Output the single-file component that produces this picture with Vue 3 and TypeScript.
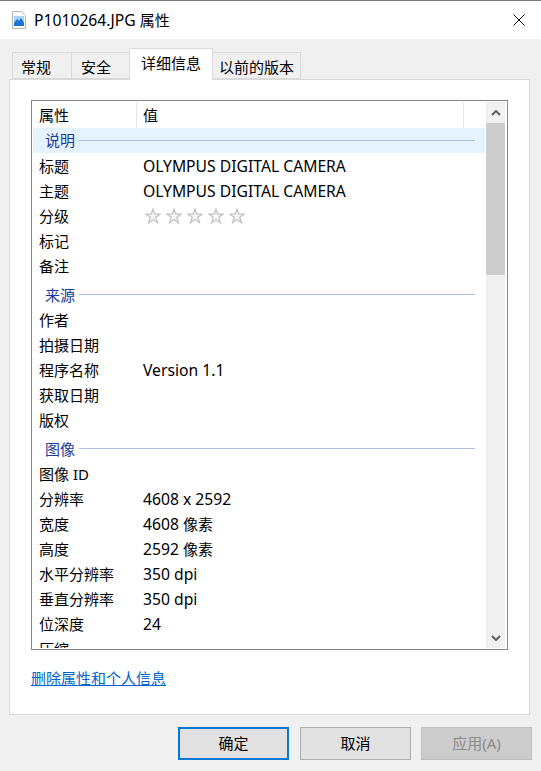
<script setup lang="ts">
type Row = { kind: 'group' | 'row' | 'stars'; label: string; value?: string; unit?: string; active?: boolean }

const rows: Row[] = [
  { kind: 'group', label: '说明', active: true },
  { kind: 'row', label: '标题', value: 'OLYMPUS DIGITAL CAMERA' },
  { kind: 'row', label: '主题', value: 'OLYMPUS DIGITAL CAMERA' },
  { kind: 'stars', label: '分级' },
  { kind: 'row', label: '标记' },
  { kind: 'row', label: '备注' },
  { kind: 'group', label: '来源' },
  { kind: 'row', label: '作者' },
  { kind: 'row', label: '拍摄日期' },
  { kind: 'row', label: '程序名称', value: 'Version 1.1' },
  { kind: 'row', label: '获取日期' },
  { kind: 'row', label: '版权' },
  { kind: 'group', label: '图像' },
  { kind: 'row', label: '图像 ID' },
  { kind: 'row', label: '分辨率', value: '4608 x 2592' },
  { kind: 'row', label: '宽度', value: '4608 ', unit: '像素' },
  { kind: 'row', label: '高度', value: '2592 ', unit: '像素' },
  { kind: 'row', label: '水平分辨率', value: '350 dpi' },
  { kind: 'row', label: '垂直分辨率', value: '350 dpi' },
  { kind: 'row', label: '位深度', value: '24' },
  { kind: 'row', label: '压缩' },
]
const tabs = ['常规', '安全', '详细信息', '以前的版本']
</script>

<template>
  <div class="win">
    <header class="titlebar">
      <svg class="fileicon" width="14" height="18" viewBox="0 0 14 18">
        <path d="M.5.5h9l4 4v13H.5z" fill="#fff" stroke="#b4b4b4" />
        <path d="M2 5h10v10H2z" fill="#a7d2f5" />
        <path d="M2 15v-3l3-4 2 2 2-3 3 5v3z" fill="#1a74d6" />
      </svg>
      <span class="titletext"><span class="latin">P1010264.JPG </span>属性</span>
      <svg class="close" width="12" height="12" viewBox="0 0 12 12">
        <path d="M.5.5l11 11M11.500.5l-11 11" stroke="#111" stroke-width="1" fill="none" />
      </svg>
    </header>

    <main class="body">
      <nav class="tabs">
        <div
          v-for="(t, i) in tabs"
          :key="t"
          class="tab"
          :class="['tab' + i, { on: i === 2 }]"
        >{{ t }}</div>
      </nav>

      <section class="panel">
        <div class="listbox">
          <div class="listmain">
            <div class="head">
              <div class="hcell hname">属性</div>
              <div class="hcell hval">值</div>
              <div class="hrest"></div>
            </div>
            <div class="rows">
              <template v-for="r in rows" :key="r.label">
                <div v-if="r.kind === 'group'" class="group" :class="{ active: r.active }">
                  <span class="gname">{{ r.label }}</span>
                  <span class="gline"></span>
                </div>
                <div v-else class="row">
                  <span class="name">{{ r.label }}</span>
                  <span v-if="r.kind === 'stars'" class="stars">
                    <svg v-for="n in 5" :key="n" width="16" height="16" viewBox="0 0 16 16">
                      <path d="M8 1.200l1.800 4.900h5.300l-4.300 3.200 1.600 5.400L8 11.500l-4.400 3.200 1.600-5.400L.9 6.100h5.300z" fill="#f6f6f6" stroke="#c4c4c4" stroke-width="1.300" />
                    </svg>
                  </span>
                  <span v-else class="val"><span class="latin">{{ r.value }}</span>{{ r.unit }}</span>
                </div>
              </template>
            </div>
          </div>
          <div class="scrollbar">
            <div class="arrow">
              <svg width="10" height="6" viewBox="0 0 10 6"><path d="M1 5l4-4 4 4" fill="none" stroke="#606060" stroke-width="2" /></svg>
            </div>
            <div class="thumb"></div>
            <div class="track"></div>
            <div class="arrow">
              <svg width="10" height="6" viewBox="0 0 10 6"><path d="M1 1l4 4 4-4" fill="none" stroke="#606060" stroke-width="2" /></svg>
            </div>
          </div>
        </div>
        <a class="link">删除属性和个人信息</a>
      </section>

      <footer class="buttons">
        <button class="btn primary">确定</button>
        <button class="btn">取消</button>
        <button class="btn disabled">应用(A)</button>
      </footer>
    </main>
  </div>
</template>

<style scoped>
.win {
  width: 541px;
  height: 771px;
  display: flex;
  flex-direction: column;
  background: #f0f0f0;
  font-family: "Noto Sans", "Noto Sans CJK SC", sans-serif;
  font-size: 15px;
  color: #000;
  overflow: hidden;
}
.latin { font-size: 15.7px; }
.titlebar {
  height: 39px;
  flex: none;
  box-sizing: border-box;
  border-top: 1px solid #7a7a7a;
  background: #fff;
  display: flex;
  align-items: center;
  padding: 0 16px 0 12px;
}
.fileicon { flex: none; margin-right: 8px; }
.titletext { flex: 1; font-size: 15px; }
.close { flex: none; }
.body {
  flex: 1;
  display: flex;
  flex-direction: column;
  padding: 10px 9px 0 9px;
}
.tabs {
  display: flex;
  align-items: flex-end;
  height: 31px;
  padding-left: 3px;
  position: relative;
  z-index: 1;
  margin-bottom: -1px;
}
.tab {
  box-sizing: border-box;
  height: 27px;
  line-height: 28px;
  background: #f0f0f0;
  border: 1px solid #d9d9d9;
  margin-left: -1px;
  margin-bottom: 1px;
}
.tab0 { width: 60px; margin-left: 0; padding-left: 8px; }
.tab1 { width: 59px; padding-left: 9px; }
.tab2 { width: 84px; padding-left: 11px; }
.tab3 { width: 89px; padding-left: 6px; }
.tab.on {
  height: 32px;
  line-height: 29px;
  background: #fff;
  border-bottom-color: #fff;
  margin-bottom: 0;
  position: relative;
  z-index: 2;
}
.panel {
  box-sizing: border-box;
  width: 521px;
  height: 636px;
  flex: none;
  background: #fff;
  border: 1px solid #d9d9d9;
  padding: 20px 21px 0 21px;
  display: flex;
  flex-direction: column;
}
.listbox {
  box-sizing: border-box;
  width: 477px;
  height: 550px;
  flex: none;
  border: 1px solid #828790;
  padding: 1px;
  display: flex;
}
.listmain { flex: 1; min-width: 0; overflow: hidden; }
.head { display: flex; height: 26px; }
.hcell { box-sizing: border-box; line-height: 26px; padding-left: 6px; border-right: 1px solid #e5e5e5; }
.hname { width: 104px; }
.hval { width: 327px; }
.hrest { flex: 1; }
.group {
  box-sizing: border-box;
  height: 29px;
  display: flex;
  align-items: center;
  padding: 3px 0 0 12px;
  color: #1a3a9a;
}
.group.active { height: 25px; background: #e5f3ff; padding: 0 0 1px 12px; }
.group.active .gname { padding-bottom: 1px; }
.gname { flex: none; }
.gline { flex: none; width: 396px; height: 1px; margin-left: 4px; background: #aebde8; }
.group.active .gline { background: #a3bfe4; }
.row { height: 25px; display: flex; align-items: center; padding-left: 6px; }
.name { width: 104px; flex: none; white-space: nowrap; padding-bottom: 1px; }
.stars { display: flex; gap: 5px; margin-left: 2px; }
.val { white-space: pre; }
.scrollbar {
  width: 19px;
  flex: none;
  background: #f0f0f0;
  display: flex;
  flex-direction: column;
  margin-right: 1px;
  margin-left: 1px;
}
.arrow { height: 21px; flex: none; display: flex; align-items: center; justify-content: center; }
.thumb { height: 152px; flex: none; background: #cdcdcd; }
.track { flex: 1; }
.link {
  margin-top: 18px;
  align-self: flex-start;
  color: #0066cc;
  text-decoration: underline;
  line-height: 20px;
}
.buttons {
  display: flex;
  justify-content: flex-end;
  margin-top: 12px;
}
.btn {
  box-sizing: border-box;
  width: 111px;
  height: 33px;
  padding: 0 0 2px;
  margin: 0 0 0 11px;
  font: inherit;
  color: #000;
  background: #e1e1e1;
  border: 1px solid #adadad;
}
.btn.primary { border: 2px solid #0078d7; }
.btn.disabled { margin-left: 10px; background: #cccccc; border-color: #bfbfbf; color: #8a8a8a; }
</style>
